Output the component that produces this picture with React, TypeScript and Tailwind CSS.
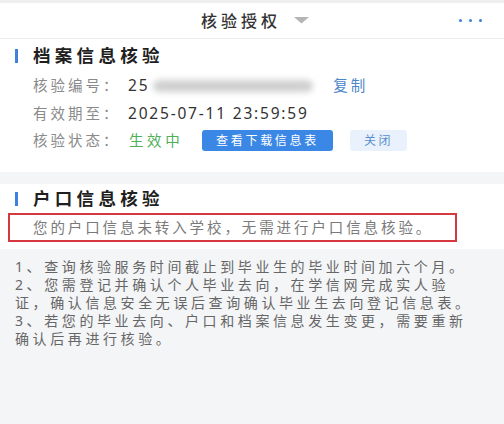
import React from "react";

const F = "font-['Noto_Sans','Noto_Sans_CJK_SC',sans-serif]";

function Bar() {
  return <div className="w-[3px] h-[14px] bg-[#3b82e0] shrink-0" />;
}

export default function App() {
  return (
    <div className={`${F} w-[504px] h-[424px] bg-[#f4f5f7] flex flex-col overflow-hidden`}>
      <div className="h-[3px] bg-[#eeeeee]" />
      {/* Header */}
      <div className="h-[36px] bg-white border-b border-[#ececec] flex items-center">
        <div className="flex-1" />
        <div className="text-[16px] font-medium tracking-[4px] text-[#333] leading-none">核验授权</div>
        <div className="flex-1 flex items-center pr-[22px]">
          <svg width="15" height="7" viewBox="0 0 15 7" className="ml-[13px]">
            <polygon points="0,0 15,0 7.5,6.5" fill="#b5b5b5" />
          </svg>
          <div className="ml-auto flex gap-[7px]">
            <div className="w-[3px] h-[3px] rounded-full bg-[#3b7fd6]" />
            <div className="w-[3px] h-[3px] rounded-full bg-[#3b7fd6]" />
            <div className="w-[3px] h-[3px] rounded-full bg-[#3b7fd6]" />
          </div>
        </div>
      </div>

      {/* Section 1 */}
      <div className="bg-white pl-[15px] pt-[7px] pb-[18px]">
        <div className="h-[20px] flex items-center">
          <Bar />
          <div className="ml-[15px] text-[17.5px] font-bold tracking-[4.3px] text-[#1f1f1f] leading-none">档案信息核验</div>
        </div>
        <div className="pl-[18px] mt-[6px] flex flex-col">
          <div className="h-[28px] flex items-center">
            <div className="w-[95px] text-[14.5px] tracking-[3px] text-[#8a8a8a]">核验编号：</div>
            <div className="text-[15.5px] tracking-[1.8px] text-[#333]">25</div>
            <div className="ml-[4px] w-[160px] h-[12px] rounded-full bg-[#cfcfcf] blur-[3px]" />
            <div className="ml-[20px] text-[14.5px] tracking-[3px] text-[#4a86c8]">复制</div>
          </div>
          <div className="h-[27px] flex items-center">
            <div className="w-[95px] text-[14.5px] tracking-[3px] text-[#8a8a8a]">有效期至：</div>
            <div className="text-[15.5px] tracking-[1.8px] text-[#333]">2025-07-11 23:59:59</div>
          </div>
          <div className="h-[27px] flex items-center">
            <div className="w-[96px] text-[14.5px] tracking-[3px] text-[#8a8a8a]">核验状态：</div>
            <div className="w-[73px] text-[14.5px] tracking-[3.6px] text-[#4fb05a]">生效中</div>
            <div className="w-[131px] h-[21px] rounded-[3px] bg-[#3b87e6] flex items-center justify-center text-[12px] tracking-[2.7px] text-white">
              查看下载信息表
            </div>
            <div className="ml-[17px] w-[57px] h-[21px] rounded-[3px] bg-[#e9f2fc] flex items-center justify-center text-[12px] tracking-[2.5px] text-[#5b8ecf]">
              关闭
            </div>
          </div>
        </div>
      </div>

      {/* Section 2 */}
      <div className="mt-[12px] bg-white pt-[5px] pb-[7px]">
        <div className="h-[20px] flex items-center pl-[15px]">
          <Bar />
          <div className="ml-[15px] text-[17.5px] font-bold tracking-[4.3px] text-[#1f1f1f] leading-none">户口信息核验</div>
        </div>
        <div className="mt-[4px] ml-[8px] w-[449px] h-[29px] border-2 border-[#d5383f] flex items-center pl-[23px]">
          <div className="text-[14.5px] tracking-[2.9px] text-[#7a7a7a] whitespace-nowrap">
            您的户口信息未转入学校，无需进行户口信息核验。
          </div>
        </div>
      </div>

      {/* Notes */}
      <div className="pt-[9px] pl-[15px] text-[14px] tracking-[3.6px] leading-[18px] text-[#666]">
        <div className="whitespace-nowrap">1、查询核验服务时间截止到毕业生的毕业时间加六个月。</div>
        <div className="whitespace-nowrap">2、您需登记并确认个人毕业去向，在学信网完成实人验</div>
        <div className="whitespace-nowrap">证，确认信息安全无误后查询确认毕业生去向登记信息表。</div>
        <div className="whitespace-nowrap">3、若您的毕业去向、户口和档案信息发生变更，需要重新</div>
        <div className="whitespace-nowrap">确认后再进行核验。</div>
      </div>
    </div>
  );
}
